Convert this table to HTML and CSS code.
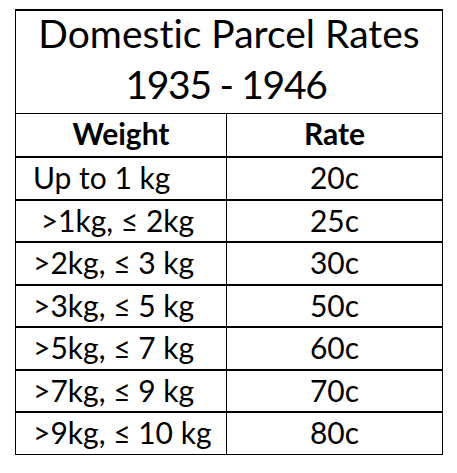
FILE: index.html
```html
<!DOCTYPE html>
<html>
<head>
<meta charset="utf-8">
<link rel="stylesheet" href="styles.css">
</head>
<body>
<div class="sheet">
  <div class="title"><div class="title-text">Domestic Parcel Rates<br><span class="years">1935 - 1946</span></div></div>
  <div class="row head">
    <div class="cell left">Weight</div>
    <div class="cell right">Rate</div>
  </div>
  <div class="row">
    <div class="cell left start">Up to 1 kg</div>
    <div class="cell right">20c</div>
  </div>
  <div class="row">
    <div class="cell left start">&nbsp;&gt;1kg, ≤ 2kg</div>
    <div class="cell right">25c</div>
  </div>
  <div class="row">
    <div class="cell left start">&gt;2kg, ≤ 3 kg</div>
    <div class="cell right">30c</div>
  </div>
  <div class="row">
    <div class="cell left start">&gt;3kg, ≤ 5 kg</div>
    <div class="cell right">50c</div>
  </div>
  <div class="row">
    <div class="cell left start">&gt;5kg, ≤ 7 kg</div>
    <div class="cell right">60c</div>
  </div>
  <div class="row">
    <div class="cell left start">&gt;7kg, ≤ 9 kg</div>
    <div class="cell right">70c</div>
  </div>
  <div class="row last">
    <div class="cell left start">&gt;9kg, ≤ 10 kg</div>
    <div class="cell right">80c</div>
  </div>
</div>
</body>
</html>
```
FILE: styles.css
```css
html, body {
  margin: 0;
  padding: 0;
  background: #ffffff;
}
body {
  font-family: "Lato", "Liberation Sans", sans-serif;
  color: #000000;
  font-variant-ligatures: none;
}
.sheet {
  margin: 9px 0 0 15px;
  width: 428px;
  box-sizing: border-box;
  border-top: 2px solid #000;
  border-left: 1px solid #000;
  border-right: 1px solid #000;
  border-bottom: 1px solid #000;
}
.title {
  height: 103px;
  box-sizing: border-box;
  border-bottom: 1px solid #000;
  padding-bottom: 6px;
  display: flex;
  align-items: center;
  justify-content: center;
}
.title-text {
  text-align: center;
  font-size: 39px;
  line-height: 51px;
  white-space: nowrap;
}
.years {
  letter-spacing: -1.3px;
  margin-left: -6px;
}
.row {
  display: grid;
  grid-template-columns: 211px 1fr;
  height: 42.5px;
  box-sizing: border-box;
  border-bottom: 2px solid #000;
}
.row.head {
  height: 44px;
  font-weight: bold;
}
.row.last {
  border-bottom: none;
  height: 40.5px;
}
.cell {
  font-size: 30px;
  line-height: 39px;
  text-align: center;
  white-space: pre;
}
.cell.left {
  border-right: 1px solid #000;
}
.cell.start {
  text-align: left;
  padding-left: 17px;
}
```
